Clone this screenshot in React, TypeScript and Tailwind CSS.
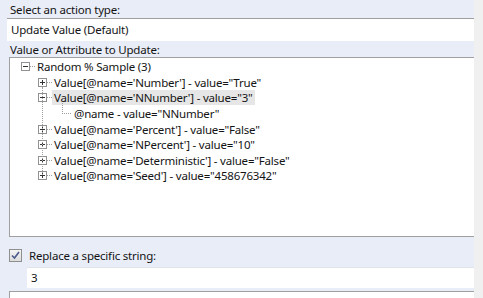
import React from "react";

const font = { fontFamily: '"Noto Sans", "Segoe UI", sans-serif', letterSpacing: "-0.2px" };

function PlusBox({ minus }: { minus?: boolean }) {
  return (
    <svg width="9" height="9" viewBox="0 0 9 9" className="shrink-0">
      <rect x="0.5" y="0.5" width="8" height="8" fill="#fff" stroke="#919191" />
      <line x1="2" y1="4.5" x2="7" y2="4.5" stroke="#333" />
      {!minus && <line x1="4.5" y1="2" x2="4.5" y2="7" stroke="#333" />}
    </svg>
  );
}

function Dots({ w }: { w: number }) {
  return (
    <span
      className="shrink-0 h-px border-t border-dotted border-[#a0a0a0]"
      style={{ width: w }}
    />
  );
}

const children = [
  { t: `Value[@name='Number'] - value="True"` },
  { t: `Value[@name='NNumber'] - value="3"`, open: true, sel: true },
  { t: `@name - value="NNumber"`, leaf: true },
  { t: `Value[@name='Percent'] - value="False"` },
  { t: `Value[@name='NPercent'] - value="10"` },
  { t: `Value[@name='Deterministic'] - value="False"` },
  { t: `Value[@name='Seed'] - value="458676342"` },
];

export default function App() {
  return (
    <div
      className="w-[483px] h-[298px] overflow-hidden flex bg-[#f0f0f0] text-[11.5px] text-[#141414]"
      style={font}
    >
      <div className="w-[474px] h-full bg-[#e9edf7] flex flex-col">
        <div className="pl-[10px] pt-[2px] h-[18px] leading-[16px]">Select an action type:</div>
        <div className="ml-[7px] h-[23px] bg-white border-t border-[#a0a0a0] pl-[4px] leading-[21px]">
          Update Value (Default)
        </div>
        <div className="pl-[10px] h-[16px] leading-[16px] pt-[1px]">Value or Attribute to Update:</div>
        <div className="ml-[9px] h-[180px] bg-white border-t border-l border-b border-[#a0a0a0] relative pt-[1px]">
          <div className="flex items-center h-[15.6px] pl-[11px]">
            <PlusBox minus />
            <Dots w={5} />
            <span className="pl-[2px] leading-[15px]">Random % Sample (3)</span>
          </div>
          <div className="absolute left-[32px] top-[29px] h-[88px] border-l border-dotted border-[#a0a0a0]" />
          <div className="absolute left-[52px] top-[45px] h-[9px] border-l border-dotted border-[#a0a0a0]" />
          {children.map((c, i) =>
            c.leaf ? (
              <div key={i} className="flex items-center h-[15.6px] pl-[52px]">
                <Dots w={9} />
                <span className="pl-[3px] leading-[15px]">{c.t}</span>
              </div>
            ) : (
              <div key={i} className="flex items-center h-[15.6px] pl-[28px]">
                <PlusBox minus={c.open} />
                <Dots w={5} />
                <span
                  className={
                    "pl-[2px] pr-[2px] leading-[15px] " + (c.sel ? "bg-[#e6e6e6]" : "")
                  }
                >
                  {c.t}
                </span>
              </div>
            )
          )}
        </div>
        <div className="flex items-center pl-[9px] mt-[11px] h-[15px]">
          <span className="w-[13px] h-[13px] border border-[#8e8f8f] bg-gradient-to-b from-[#f4f4f4] to-[#dcdcdc] flex items-center justify-center">
            <svg width="9" height="9" viewBox="0 0 9 9">
              <path d="M1 4.5 L3.5 7 L8 1" fill="none" stroke="#4a5a8a" strokeWidth="1.6" />
            </svg>
          </span>
          <span className="pl-[7px] leading-[15px]">Replace a specific string:</span>
        </div>
        <div className="ml-[27px] mt-[4px] h-[21px] bg-white border-t border-[#e0e3ea] pl-[4px] leading-[20px]">
          3
        </div>
        <div className="ml-[9px] mt-[3px] flex-1 bg-white border-l border-t border-[#a0a0a0]" />
      </div>
    </div>
  );
}
